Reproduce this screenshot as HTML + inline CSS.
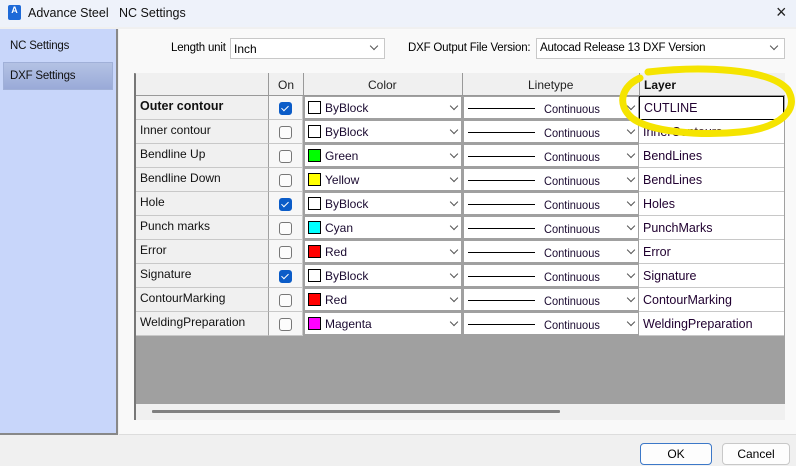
<!DOCTYPE html>
<html><head><meta charset="utf-8"><style>
*{box-sizing:border-box;margin:0;padding:0}
body{width:796px;height:466px;overflow:hidden;background:#f0f0f0;font-family:"Liberation Sans",sans-serif;font-size:12px;color:#000;position:relative}
.a{position:absolute}
.sel{background:#fff;border:1px solid #c8c8c8}
.chev{position:absolute;width:6px;height:6px;border-right:1px solid #555;border-bottom:1px solid #555;transform:rotate(45deg)}
.rh{position:absolute;left:136px;width:133px;height:24px;background:#f0f0f0;border-bottom:1px solid #c8c8c8;border-right:1px solid #a0a0a0;padding:3px 0 0 4px;color:#111}
.on{position:absolute;left:269px;width:34px;height:24px;background:#f7f7f7;border-bottom:1px solid #c8c8c8;border-right:1px solid #c8c8c8}
.cb{position:absolute;left:10px;top:6px;width:13px;height:13px;border:1px solid #777;border-radius:3px;background:#fcfcfc}
.cb.k{background:#0b5cc8;border-color:#0b5cc8}
.cb.k:after{content:"";position:absolute;left:3px;top:1px;width:3px;height:6px;border-right:1px solid #fff;border-bottom:1px solid #fff;transform:rotate(45deg)}
.col{position:absolute;left:304px;width:158px;height:23px;background:#fff;border:1px solid #a0a0a0}
.sw{position:absolute;left:3px;top:4px;width:13px;height:13px;border:1px solid #000}
.ct{position:absolute;left:20px;top:4px;color:#1a0a30}
.lt{position:absolute;left:463px;width:176px;height:23px;background:#fff;border:1px solid #a0a0a0}
.ln{position:absolute;left:4px;top:11px;width:67px;height:1px;background:#000}
.lx{position:absolute;left:80px;top:5px;color:#1a0a30;transform:scaleX(.92);transform-origin:left}
.ly{position:absolute;left:639px;width:145px;height:24px;background:#fff;border-bottom:1px solid #c8c8c8;padding:5px 0 0 4px;color:#200030;font-size:12.5px}
.btn{position:absolute;height:22px;border:1px solid #c8c8c8;background:#fdfdfd;border-radius:4px;text-align:center;line-height:20px}
.s{font-size:11.5px;letter-spacing:-0.2px}
</style></head><body>
<div class="a" style="left:0;top:0;width:796px;height:27px;background:#eef2fa"></div>
<div class="a" style="left:8px;top:5px;width:13px;height:15px;background:#1e6ad8;border-radius:2px;color:#fff;font-size:9px;font-weight:bold;text-align:center;line-height:11px">A</div>
<div class="a" style="left:28px;top:6px;font-size:12.5px;color:#111">Advance Steel&nbsp;&nbsp;&nbsp;NC Settings</div>
<div class="a" style="left:776px;top:2px;font-size:18px;color:#222">×</div>
<div class="a" style="left:0;top:29px;width:118px;height:406px;background:#c8d6fa;border-right:2px solid #888;border-bottom:2px solid #888"></div>
<div class="a s" style="left:10px;top:40px;color:#111">NC Settings</div>
<div class="a" style="left:3px;top:62px;width:110px;height:28px;background:linear-gradient(#b4c2e4,#9aaad8);border:1px solid #a0b0d8"></div>
<div class="a s" style="left:10px;top:70px;color:#111">DXF Settings</div>
<div class="a" style="left:119px;top:29px;width:677px;height:406px;background:#f9f9f9;border-bottom:1px solid #ddd"></div>
<div class="a s" style="left:171px;top:42px">Length unit</div>
<div class="a sel" style="left:230px;top:38px;width:155px;height:21px"><span class="a" style="left:3px;top:3px">Inch</span><i class="chev" style="left:140px;top:4px"></i></div>
<div class="a s" style="left:408px;top:42px">DXF Output File Version:</div>
<div class="a sel" style="left:536px;top:38px;width:249px;height:21px"><span class="a s" style="left:3px;top:3px">Autocad Release 13 DXF Version</span><i class="chev" style="left:234px;top:4px"></i></div>
<div class="a" style="left:134px;top:73px;width:651px;height:347px;background:#a0a0a0;border-left:2px solid #777;border-top:1px solid #aaa"></div>
<div class="a" style="left:136px;top:73px;width:649px;height:23px;background:#f0f0f0;border-bottom:1px solid #999"></div>
<div class="a" style="left:268px;top:73px;width:1px;height:23px;background:#999"></div>
<div class="a" style="left:303px;top:73px;width:1px;height:23px;background:#999"></div>
<div class="a" style="left:462px;top:73px;width:1px;height:23px;background:#999"></div>
<div class="a" style="left:639px;top:73px;width:1px;height:23px;background:#999"></div>
<div class="a" style="left:278px;top:78px;color:#222">On</div>
<div class="a" style="left:368px;top:78px;color:#222">Color</div>
<div class="a" style="left:528px;top:78px;color:#222">Linetype</div>
<div class="a" style="left:644px;top:78px;font-weight:bold;color:#111">Layer</div>

<div class="rh" style="top:96px;font-weight:bold;font-size:12.5px">Outer contour</div><div class="on" style="top:96px"><div class="cb k"></div></div><div class="col" style="top:96px"><div class="sw" style="background:#fff"></div><span class="ct">ByBlock</span><i class="chev" style="left:146px;top:6px"></i></div><div class="lt" style="top:96px"><div class="ln"></div><span class="lx">Continuous</span><i class="chev" style="left:164px;top:6px"></i></div><div class="ly" style="top:96px;border:1px solid #000;padding-top:4px">CUTLINE</div>

<div class="rh" style="top:120px">Inner contour</div><div class="on" style="top:120px"><div class="cb"></div></div><div class="col" style="top:120px"><div class="sw" style="background:#fff"></div><span class="ct">ByBlock</span><i class="chev" style="left:146px;top:6px"></i></div><div class="lt" style="top:120px"><div class="ln"></div><span class="lx">Continuous</span><i class="chev" style="left:164px;top:6px"></i></div><div class="ly" style="top:120px">InnerContours</div>

<div class="rh" style="top:144px">Bendline Up</div><div class="on" style="top:144px"><div class="cb"></div></div><div class="col" style="top:144px"><div class="sw" style="background:#00ff00"></div><span class="ct">Green</span><i class="chev" style="left:146px;top:6px"></i></div><div class="lt" style="top:144px"><div class="ln"></div><span class="lx">Continuous</span><i class="chev" style="left:164px;top:6px"></i></div><div class="ly" style="top:144px">BendLines</div>

<div class="rh" style="top:168px">Bendline Down</div><div class="on" style="top:168px"><div class="cb"></div></div><div class="col" style="top:168px"><div class="sw" style="background:#ffff00"></div><span class="ct">Yellow</span><i class="chev" style="left:146px;top:6px"></i></div><div class="lt" style="top:168px"><div class="ln"></div><span class="lx">Continuous</span><i class="chev" style="left:164px;top:6px"></i></div><div class="ly" style="top:168px">BendLines</div>

<div class="rh" style="top:192px">Hole</div><div class="on" style="top:192px"><div class="cb k"></div></div><div class="col" style="top:192px"><div class="sw" style="background:#fff"></div><span class="ct">ByBlock</span><i class="chev" style="left:146px;top:6px"></i></div><div class="lt" style="top:192px"><div class="ln"></div><span class="lx">Continuous</span><i class="chev" style="left:164px;top:6px"></i></div><div class="ly" style="top:192px">Holes</div>

<div class="rh" style="top:216px">Punch marks</div><div class="on" style="top:216px"><div class="cb"></div></div><div class="col" style="top:216px"><div class="sw" style="background:#00ffff"></div><span class="ct">Cyan</span><i class="chev" style="left:146px;top:6px"></i></div><div class="lt" style="top:216px"><div class="ln"></div><span class="lx">Continuous</span><i class="chev" style="left:164px;top:6px"></i></div><div class="ly" style="top:216px">PunchMarks</div>

<div class="rh" style="top:240px">Error</div><div class="on" style="top:240px"><div class="cb"></div></div><div class="col" style="top:240px"><div class="sw" style="background:#ff0000"></div><span class="ct">Red</span><i class="chev" style="left:146px;top:6px"></i></div><div class="lt" style="top:240px"><div class="ln"></div><span class="lx">Continuous</span><i class="chev" style="left:164px;top:6px"></i></div><div class="ly" style="top:240px">Error</div>

<div class="rh" style="top:264px">Signature</div><div class="on" style="top:264px"><div class="cb k"></div></div><div class="col" style="top:264px"><div class="sw" style="background:#fff"></div><span class="ct">ByBlock</span><i class="chev" style="left:146px;top:6px"></i></div><div class="lt" style="top:264px"><div class="ln"></div><span class="lx">Continuous</span><i class="chev" style="left:164px;top:6px"></i></div><div class="ly" style="top:264px">Signature</div>

<div class="rh" style="top:288px">ContourMarking</div><div class="on" style="top:288px"><div class="cb"></div></div><div class="col" style="top:288px"><div class="sw" style="background:#ff0000"></div><span class="ct">Red</span><i class="chev" style="left:146px;top:6px"></i></div><div class="lt" style="top:288px"><div class="ln"></div><span class="lx">Continuous</span><i class="chev" style="left:164px;top:6px"></i></div><div class="ly" style="top:288px">ContourMarking</div>

<div class="rh" style="top:312px">WeldingPreparation</div><div class="on" style="top:312px"><div class="cb"></div></div><div class="col" style="top:312px"><div class="sw" style="background:#ff00ff"></div><span class="ct">Magenta</span><i class="chev" style="left:146px;top:6px"></i></div><div class="lt" style="top:312px"><div class="ln"></div><span class="lx">Continuous</span><i class="chev" style="left:164px;top:6px"></i></div><div class="ly" style="top:312px">WeldingPreparation</div>

<div class="a" style="left:136px;top:404px;width:649px;height:16px;background:#f0f0f0"></div>
<div class="a" style="left:152px;top:410px;width:408px;height:3px;background:#808080;border-radius:1px"></div>
<svg class="a" style="left:0;top:0" width="796" height="466"><path d="M648 72 C700 66 770 68 788 90 C800 110 780 128 740 132 C700 136 650 132 632 118 C616 104 622 86 640 78" fill="none" stroke="#f5e400" stroke-width="7" stroke-linecap="round"/></svg>
<div class="btn" style="left:640px;top:443px;width:72px;border-color:#3c78c8">OK</div>
<div class="btn" style="left:722px;top:443px;width:68px">Cancel</div>
</body></html>
